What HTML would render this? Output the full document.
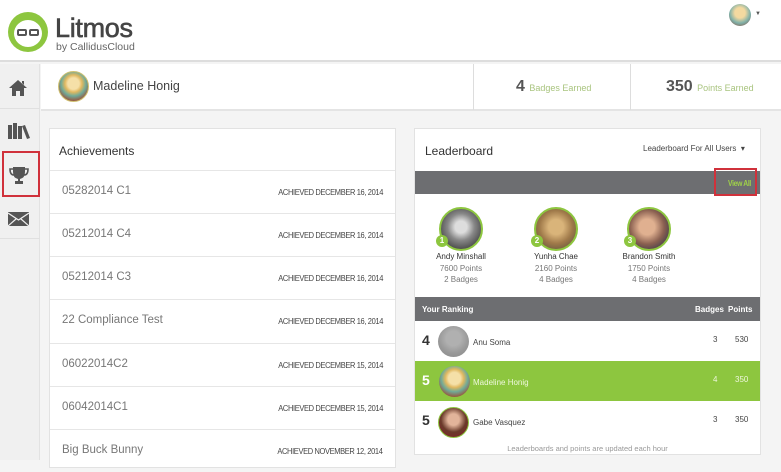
<!DOCTYPE html>
<html><head><meta charset="utf-8"><style>
*{margin:0;padding:0;box-sizing:border-box}
body{width:781px;height:460px;overflow:hidden;background:#f4f4f4;font-family:"Liberation Sans",sans-serif;position:relative}
.a{position:absolute;white-space:nowrap}
.cond{font-family:"Liberation Sans Narrow","Liberation Sans",sans-serif}
.row{position:absolute;left:0;right:0;height:43px;border-top:1px solid #e6e6e6}
.row .t{position:absolute;left:12px;top:14px;font-size:11.5px;color:#777}
.row .d{position:absolute;right:12px;top:16px;font-size:8.5px;color:#444;letter-spacing:-0.4px;transform:scaleX(.88);transform-origin:right}
.av{position:absolute;border-radius:50%}
</style></head><body>
<div class="a" style="left:0;top:0;width:781px;height:62px;background:#fff;border-bottom:2px solid #ddd"></div>
<div class="a" style="left:8px;top:12px;width:40px;height:40px;border-radius:50%;background:#8dc63f"></div>
<div class="a" style="left:14px;top:20px;width:28px;height:27px;border-radius:50%;background:#fff"></div>
<div class="a" style="left:17px;top:29px;width:10px;height:7px;border:2px solid #555;border-radius:2px"></div>
<div class="a" style="left:29px;top:29px;width:10px;height:7px;border:2px solid #555;border-radius:2px"></div>
<div class="a" style="left:55px;top:13px;font-size:27px;color:#444;letter-spacing:-0.3px;-webkit-text-stroke:0.6px #444">Litmos</div>
<div class="a" style="left:56px;top:41px;font-size:10.5px;color:#666">by CallidusCloud</div>
<div class="av" style="left:729px;top:4px;width:22px;height:22px;background:radial-gradient(circle at 50% 40%,#f3d9a0 30%,#7fb0a8 60%,#8a3b2a)"></div>
<div class="a" style="left:755px;top:11px;font-size:6px;color:#555">▼</div>
<div class="a" style="left:0;top:64px;width:40px;height:396px;background:#f0f0f0;border-right:1px solid #e2e2e2"></div>
<div class="a" style="left:0;top:108px;width:40px;height:1px;background:#e0e0e0"></div>
<div class="a" style="left:0;top:238px;width:40px;height:1px;background:#e0e0e0"></div>
<svg class="a" style="left:8px;top:79px" width="20" height="18" viewBox="0 0 20 18"><path d="M10 1 L1 9 H4 V17 H8 V12 H12 V17 H16 V9 H19 Z M14 2 H16 V6 L14 4Z" fill="#555"/></svg>
<svg class="a" style="left:8px;top:123px" width="22" height="16" viewBox="0 0 22 16"><rect x="0" y="2" width="4" height="14" fill="#555"/><rect x="5" y="0" width="4" height="16" fill="#555"/><rect x="10" y="3" width="4" height="13" fill="#555"/><path d="M14 3 L17 2 L22 15 L19 16Z" fill="#555"/></svg>
<div class="a" style="left:2px;top:151px;width:38px;height:46px;border:2px solid #d0313b"></div>
<svg class="a" style="left:9px;top:166px" width="20" height="19" viewBox="0 0 20 19"><path d="M4 1 H16 V6 Q16 12 11 13 V15 H14 V18 H6 V15 H9 V13 Q4 12 4 6Z" fill="#555"/><path d="M4 3 H1 Q1 9 5 9 M16 3 H19 Q19 9 15 9" stroke="#555" stroke-width="1.6" fill="none"/></svg>
<svg class="a" style="left:8px;top:212px" width="21" height="14" viewBox="0 0 21 14"><rect width="21" height="14" fill="#555"/><path d="M0 1 L10.5 8 L21 1 M0 14 L8 7 M21 14 L13 7" stroke="#f0f0f0" stroke-width="1.2" fill="none"/></svg>
<div class="a" style="left:41px;top:64px;width:740px;height:47px;background:#fff;border-bottom:2px solid #e4e4e4"></div>
<div class="av" style="left:58px;top:71px;width:31px;height:31px;background:radial-gradient(circle at 50% 40%,#f5e0a8 25%,#e0b860 38%,#70aa98 55%,#9d4a32 80%);border:1px solid #cfc070"></div>
<div class="a" style="left:93px;top:79px;font-size:12.5px;color:#444">Madeline Honig</div>
<div class="a" style="left:473px;top:64px;width:1px;height:46px;background:#ddd"></div>
<div class="a" style="left:630px;top:64px;width:1px;height:46px;background:#ddd"></div>
<div class="a cond" style="left:516px;top:78px;font-size:16px;color:#555;font-weight:bold">4 <span style="font-size:9px;color:#a9c47f;font-weight:normal">Badges Earned</span></div>
<div class="a cond" style="left:666px;top:78px;font-size:16px;color:#555;font-weight:bold">350 <span style="font-size:9px;color:#a9c47f;font-weight:normal">Points Earned</span></div>
<div class="a" style="left:49px;top:128px;width:347px;height:340px;background:#fff;border:1px solid #e2e2e2">
 <div class="a" style="left:9px;top:15px;font-size:12px;color:#333">Achievements</div>
 <div class="row" style="top:41px"><span class="t">05282014 C1</span><span class="d">ACHIEVED DECEMBER 16, 2014</span></div>
 <div class="row" style="top:84px"><span class="t">05212014 C4</span><span class="d">ACHIEVED DECEMBER 16, 2014</span></div>
 <div class="row" style="top:127px"><span class="t">05212014 C3</span><span class="d">ACHIEVED DECEMBER 16, 2014</span></div>
 <div class="row" style="top:170px"><span class="t">22 Compliance Test</span><span class="d">ACHIEVED DECEMBER 16, 2014</span></div>
 <div class="row" style="top:214px"><span class="t">06022014C2</span><span class="d">ACHIEVED DECEMBER 15, 2014</span></div>
 <div class="row" style="top:257px"><span class="t">06042014C1</span><span class="d">ACHIEVED DECEMBER 15, 2014</span></div>
 <div class="row" style="top:300px"><span class="t">Big Buck Bunny</span><span class="d">ACHIEVED NOVEMBER 12, 2014</span></div>
</div>
<div class="a" style="left:414px;top:128px;width:347px;height:327px;background:#fff;border:1px solid #e2e2e2">
 <div class="a" style="left:10px;top:15px;font-size:12px;color:#333">Leaderboard</div>
 <div class="a" style="left:228px;top:15px;font-size:8px;color:#444">Leaderboard For All Users &nbsp;▾</div>
 <div class="a" style="left:0;top:42px;width:345px;height:23px;background:#6d6e71"></div>
 <div class="a" style="left:299px;top:39px;width:43px;height:28px;border:2px solid #d0313b"></div>
 <div class="a cond" style="left:313px;top:50px;font-size:8px;color:#9fd04a;font-weight:bold;letter-spacing:-0.4px;transform:scaleX(.85);transform-origin:left">View All</div>
 <div class="av" style="left:24px;top:78px;width:44px;height:44px;background:radial-gradient(circle at 50% 45%,#ddd 20%,#888 45%,#444 80%);border:2px solid #8dc63f"></div>
 <div class="av" style="left:119px;top:78px;width:44px;height:44px;background:radial-gradient(circle at 50% 45%,#d9b47a 25%,#a07a4a 55%,#6a5a40 85%);border:2px solid #8dc63f"></div>
 <div class="av" style="left:212px;top:78px;width:44px;height:44px;background:radial-gradient(circle at 45% 45%,#e0b090 25%,#8a6050 55%,#3a3a4a 85%);border:2px solid #8dc63f"></div>
 <div class="av" style="left:21px;top:106px;width:12px;height:12px;background:#8dc63f;color:#fff;font-size:8px;text-align:center;line-height:12px;font-weight:bold">1</div>
 <div class="av" style="left:116px;top:106px;width:12px;height:12px;background:#8dc63f;color:#fff;font-size:8px;text-align:center;line-height:12px;font-weight:bold">2</div>
 <div class="av" style="left:209px;top:106px;width:12px;height:12px;background:#8dc63f;color:#fff;font-size:8px;text-align:center;line-height:12px;font-weight:bold">3</div>
 <div class="a" style="left:6px;top:122px;width:80px;text-align:center;font-size:8px;line-height:11.5px;color:#777"><span style="color:#333">Andy Minshall</span><br>7600 Points<br>2 Badges</div>
 <div class="a" style="left:101px;top:122px;width:80px;text-align:center;font-size:8px;line-height:11.5px;color:#777"><span style="color:#333">Yunha Chae</span><br>2160 Points<br>4 Badges</div>
 <div class="a" style="left:194px;top:122px;width:80px;text-align:center;font-size:8px;line-height:11.5px;color:#777"><span style="color:#333">Brandon Smith</span><br>1750 Points<br>4 Badges</div>
 <div class="a cond" style="left:0;top:168px;width:345px;height:24px;background:#6d6e71;color:#fff;font-size:8px;font-weight:bold">
  <span class="a" style="left:7px;top:8px">Your Ranking</span><span class="a" style="left:280px;top:8px">Badges</span><span class="a" style="left:313px;top:8px">Points</span></div>
 <div class="a" style="left:0;top:192px;width:345px;height:40px;font-size:8px;color:#444">
  <span class="a cond" style="left:7px;top:11px;font-size:14px;font-weight:bold;color:#333">4</span>
  <div class="av" style="left:23px;top:5px;width:31px;height:31px;background:radial-gradient(circle at 50% 40%,#b0b0b0 30%,#999 60%,#888)"></div>
  <span class="a" style="left:58px;top:17px">Anu Soma</span><span class="a" style="left:298px;top:14px">3</span><span class="a" style="left:320px;top:14px">530</span></div>
 <div class="a" style="left:0;top:232px;width:345px;height:40px;background:#8dc63f;font-size:8px;color:#eef7dc">
  <span class="a cond" style="left:7px;top:11px;font-size:14px;font-weight:bold;color:#fff">5</span>
  <div class="av" style="left:24px;top:5px;width:31px;height:31px;background:radial-gradient(circle at 50% 40%,#f5e0a8 25%,#e0b860 38%,#70aa98 55%,#9d4a32 80%)"></div>
  <span class="a" style="left:58px;top:17px">Madeline Honig</span><span class="a" style="left:298px;top:14px">4</span><span class="a" style="left:320px;top:14px">350</span></div>
 <div class="a" style="left:0;top:272px;width:345px;height:40px;font-size:8px;color:#444">
  <span class="a cond" style="left:7px;top:11px;font-size:14px;font-weight:bold;color:#333">5</span>
  <div class="av" style="left:23px;top:6px;width:31px;height:31px;background:radial-gradient(circle at 50% 40%,#e2b49a 25%,#6a3a2a 55%,#7a2a2a 80%);border:1px solid #8dc63f"></div>
  <span class="a" style="left:58px;top:17px">Gabe Vasquez</span><span class="a" style="left:298px;top:14px">3</span><span class="a" style="left:320px;top:14px">350</span></div>
 <div class="a" style="left:0;top:315px;width:345px;text-align:center;font-size:7.5px;color:#999">Leaderboards and points are updated each hour</div>
</div>
</body></html>
